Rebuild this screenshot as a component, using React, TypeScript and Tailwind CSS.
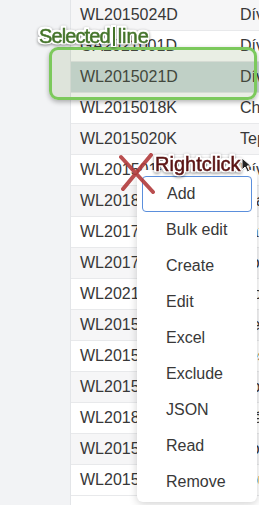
import React from 'react';

const rows: [string, string][] = [
    ['WL2015024D', 'Dívka s hrnkem'],
    ['GA2021001D', 'Dívka u okna'],
    ['WL2015021D', 'Dívka v modrém'],
    ['WL2015018K', 'Chlapec s psem'],
    ['WL2015020K', 'Tepna města'],
    ['WL2015019K', 'Dívka s knihou'],
    ['WL2018003D', 'Krajina'],
    ['WL2017012D', 'Zátiší'],
    ['WL2017008K', 'Portrét'],
    ['WL2021004D', 'Most'],
    ['WL2015016D', 'Řeka'],
    ['WL2015022K', 'Les'],
    ['WL2015017D', 'Hory'],
    ['WL2018001K', 'Město'],
    ['WL2015023D', 'Pole'],
    ['WL2015025D', 'Louka'],
];

const menuItems = ['Add', 'Bulk edit', 'Create', 'Edit', 'Excel', 'Exclude', 'JSON', 'Read', 'Remove'];

export default function App() {
    return (
        <div className="relative flex w-[259px] h-[505px] overflow-hidden bg-[#f2f3f5] font-['Liberation_Sans',Arial,sans-serif] text-[16px] text-[#383838]">
            <aside className="w-[70px] shrink-0" />

            {/* Table */}
            <div className="flex-1 border-l border-[#e3e5e8] bg-white">
                {rows.map(([code, title], i) => (
                    <div
                        key={code}
                        className={
                            'flex h-[31px] items-center border-b border-[#e8e9eb] whitespace-nowrap ' +
                            (i === 2 ? 'bg-[#cfdcdc]' : i % 2 === 0 ? 'bg-[#f6f6f7]' : 'bg-white')
                        }
                    >
                        <div className="w-[169px] shrink-0 pl-[9px]">{code}</div>
                        <div>{title}</div>
                    </div>
                ))}
            </div>

            {/* Selected row highlight */}
            <div className="absolute left-[49px] top-[47px] w-[208px] h-[53px] rounded-[9px] border-[3px] border-[#7cc95c] bg-[rgba(120,150,90,0.16)] shadow-[0_2px_5px_rgba(0,0,0,0.3)]" />
            <div className="absolute left-[39px] top-[26px] flex items-center text-[20px] leading-none tracking-[-0.9px] text-[#44742a] [-webkit-text-stroke:0.5px_#44742a] [filter:drop-shadow(1.2px_0_0_#fff)_drop-shadow(-1.2px_0_0_#fff)_drop-shadow(0_1.2px_0_#fff)_drop-shadow(0_-1.2px_0_#fff)_drop-shadow(0_1px_1.5px_rgba(0,0,0,0.45))]">
                <span>Selected</span>
                <span className="mx-[3px] inline-block w-[2px] h-[19px] bg-[#44742a]" />
                <span className="tracking-normal">line</span>
            </div>

            {/* Context menu */}
            <div className="absolute left-[137px] top-[170px] w-[120px] rounded-md bg-white pt-[6px] px-[5px] pb-[2px] shadow-[0_2px_8px_rgba(0,0,0,0.18)]">
                {menuItems.map((item, i) => (
                    <div
                        key={item}
                        className={
                            'flex h-[36px] items-center pl-[24px] rounded-[4px] ' +
                            (i === 0 ? 'border-[1.5px] border-[#5b8fdc] pl-[22.5px]' : '')
                        }
                    >
                        {item}
                    </div>
                ))}
            </div>

            {/* Right click annotation */}
            <svg className="absolute left-[116px] top-[150px]" width="42" height="44" viewBox="0 0 42 44">
                <g stroke="#b23b3c" strokeWidth="4" strokeLinecap="round" opacity="0.9">
                    <line x1="35" y1="5" x2="7" y2="39" />
                    <line x1="5" y1="7" x2="37" y2="42" />
                </g>
            </svg>
            <div className="absolute left-[155px] top-[154px] text-[20px] leading-none text-[#5b1414] [-webkit-text-stroke:0.5px_#5b1414] [filter:drop-shadow(1.2px_0_0_#fff)_drop-shadow(-1.2px_0_0_#fff)_drop-shadow(0_1.2px_0_#fff)_drop-shadow(0_-1.2px_0_#fff)_drop-shadow(0_1px_1.5px_rgba(0,0,0,0.45))]">
                Rightclick
            </div>
            <svg className="absolute left-[241px] top-[157px]" width="12" height="16" viewBox="0 0 12 16">
                <path d="M1 1 L1 13 L4 10 L6.5 15 L8.5 14 L6 9 L10 9 Z" fill="#222" stroke="#fff" strokeWidth="1" />
            </svg>
        </div>
    );
}
